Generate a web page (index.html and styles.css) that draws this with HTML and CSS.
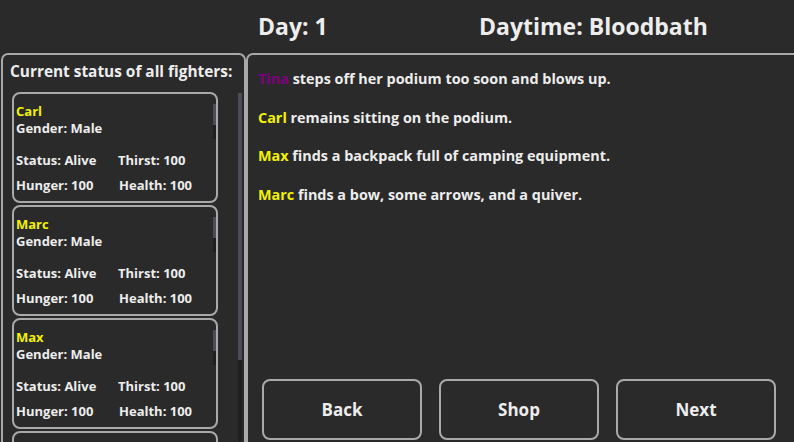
FILE: index.html
```html
<!DOCTYPE html>
<html>
<head>
<meta charset="utf-8">
<link rel="stylesheet" href="styles.css">
</head>
<body>
<header class="header">
  <div class="header-spacer"></div>
  <div class="header-titles">
    <div class="day">Day: 1</div>
    <div class="daytime">Daytime: Bloodbath</div>
  </div>
</header>
<main class="main">
  <section class="fighters">
    <div class="fighters-title">Current status of all fighters:</div>
    <div class="list-wrap">
      <div class="fighter-list">
        <div class="card">
          <div class="card-top">
            <div class="card-id">
              <div class="name">Carl</div>
              <div class="line">Gender: Male</div>
            </div>
            <div class="mini-scroll"><div class="mini-thumb"></div></div>
          </div>
          <div class="stats">
            <div>Status: Alive</div><div>Thirst: 100</div>
            <div>Hunger: 100</div><div class="c2">Health: 100</div>
          </div>
        </div>
        <div class="card">
          <div class="card-top">
            <div class="card-id">
              <div class="name">Marc</div>
              <div class="line">Gender: Male</div>
            </div>
            <div class="mini-scroll"><div class="mini-thumb"></div></div>
          </div>
          <div class="stats">
            <div>Status: Alive</div><div>Thirst: 100</div>
            <div>Hunger: 100</div><div class="c2">Health: 100</div>
          </div>
        </div>
        <div class="card">
          <div class="card-top">
            <div class="card-id">
              <div class="name">Max</div>
              <div class="line">Gender: Male</div>
            </div>
            <div class="mini-scroll"><div class="mini-thumb"></div></div>
          </div>
          <div class="stats">
            <div>Status: Alive</div><div>Thirst: 100</div>
            <div>Hunger: 100</div><div class="c2">Health: 100</div>
          </div>
        </div>
        <div class="card card-last"></div>
      </div>
      <div class="scroll-track"><div class="scroll-thumb"></div></div>
    </div>
  </section>
  <section class="events">
    <div class="log">
      <p><span class="dead">Tina</span> steps off her podium too soon and blows up.</p>
      <p><span class="alive">Carl</span> remains sitting on the podium.</p>
      <p><span class="alive">Max</span> finds a backpack full of camping equipment.</p>
      <p><span class="alive">Marc</span> finds a bow, some arrows, and a quiver.</p>
    </div>
    <div class="buttons">
      <button class="btn">Back</button>
      <button class="btn">Shop</button>
      <button class="btn">Next</button>
    </div>
  </section>
</main>
</body>
</html>
```

FILE: styles.css
```css
* { box-sizing: border-box; }
html, body {
  margin: 0;
  padding: 0;
  width: 794px;
  height: 442px;
  overflow: hidden;
  background: #2a2a2a;
  color: #ededed;
  font-family: "Open Sans", "DejaVu Sans", sans-serif;
  font-weight: 700;
}
.header {
  height: 53px;
  display: flex;
  align-items: center;
}
.header-spacer { width: 258px; }
.header-titles {
  display: grid;
  grid-template-columns: 221px auto;
  font-size: 23px;
  line-height: 26px;
  margin-top: -2px;
}
.main {
  height: 389px;
  display: flex;
}
.fighters {
  width: 245px;
  margin-left: 1px;
  border: 2px solid #a9a9a9;
  border-bottom: none;
  border-radius: 7px 7px 0 0;
  display: flex;
  flex-direction: column;
  min-height: 0;
}
.fighters-title {
  font-size: 15.4px;
  line-height: 18px;
  padding: 8px 0 0 7px;
  height: 37px;
  white-space: nowrap;
}
.list-wrap {
  flex: 1;
  min-height: 0;
  display: flex;
  padding-left: 9px;
}
.fighter-list {
  width: 206px;
  overflow: hidden;
  display: flex;
  flex-direction: column;
  gap: 2px;
}
.scroll-track {
  width: 4px;
  margin: 1px 0 0 20px;
  background: #1f1f23;
  border-radius: 0 0 2px 2px;
}
.scroll-thumb {
  height: 267px;
  background: #4c4c56;
}
.card {
  flex: none;
  width: 206px;
  height: 111px;
  border: 2px solid #a9a9a9;
  border-radius: 8px;
  padding: 9px 0 0 2px;
  font-size: 13px;
  line-height: 17px;
}
.card-top {
  display: flex;
  height: 35px;
}
.card-id { flex: 1; }
.name { color: #f2f200; }
.mini-scroll {
  width: 3px;
  height: 35px;
  background: #1f1f23;
  margin-top: 1px;
}
.mini-thumb {
  height: 21px;
  background: #4c4c56;
}
.stats {
  display: grid;
  grid-template-columns: 102px auto;
  row-gap: 8px;
  margin-top: 14px;
}
.stats .c2 { padding-left: 1px; }
.events {
  flex: 1;
  margin-right: -12px;
  border: 2px solid #a9a9a9;
  border-bottom: none;
  border-radius: 7px 7px 0 0;
  display: flex;
  flex-direction: column;
}
.log {
  flex: 1;
  padding: 14px 0 0 10px;
  font-size: 14.4px;
  line-height: 20px;
}
.log p { margin: 0 0 18.5px 0; white-space: nowrap; }
.dead { color: #800080; }
.alive { color: #f2f200; }
.buttons {
  display: flex;
  gap: 17px;
  padding: 0 0 2px 14px;
}
.btn {
  flex: none;
  width: 160px;
  height: 61px;
  background: #2a2a2a;
  color: #ededed;
  border: 2px solid #a9a9a9;
  border-radius: 8px;
  font-family: inherit;
  font-weight: 700;
  font-size: 17px;
  padding: 0;
}
```
